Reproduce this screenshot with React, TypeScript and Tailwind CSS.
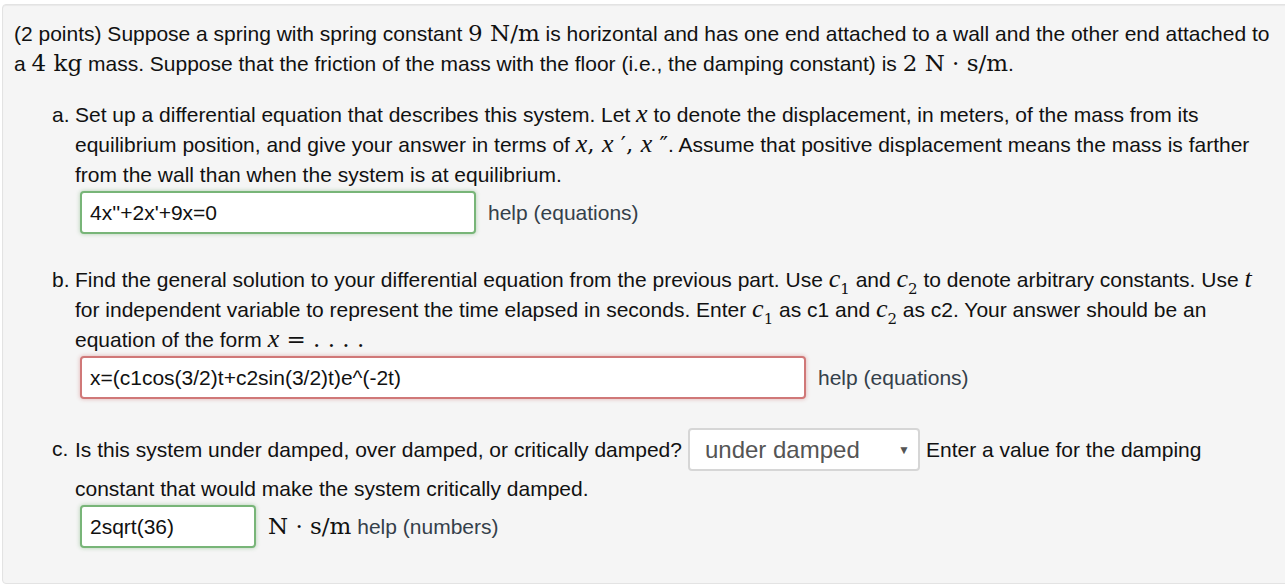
import React from "react";

const sans = { fontFamily: '"Liberation Sans", Arial, sans-serif' };
const serif = { fontFamily: '"DejaVu Serif", "Liberation Serif", serif' };
const times = { fontFamily: '"Liberation Serif", serif' };

// math in a serif face, a little larger than the body text
const M = ({ children }: { children: React.ReactNode }) => (
  <span className="text-[23px] leading-none" style={serif}>
    {children}
  </span>
);
const V = ({ children }: { children: React.ReactNode }) => (
  <i className="text-[26px]" style={times}>
    {children}
  </i>
);
const C = ({ n }: { n: string }) => (
  <M>
    <V>c</V>
    <sub className="text-[15px] align-[-3px]">{n}</sub>
  </M>
);

const Help = ({ label }: { label: string }) => <span className="text-[#34404a]">help ({label})</span>;

export default function App() {
  return (
    <div className="min-h-screen bg-white pt-[4px] pl-[2px] text-[21px] leading-[30px] text-[#111]" style={sans}>
      <div className="w-[1300px] whitespace-nowrap rounded-l-[4px] border border-[#e3e3e3] bg-[#f5f5f5] pt-[14px] pb-[35px] pl-[11px] shadow-[inset_0_1px_1px_rgba(0,0,0,0.05)]">
        <p>
          (2 points) Suppose a spring with spring constant <M>9 N/m</M> is horizontal and has one end attached to a wall and the other end attached to
          <br />a <M>4 kg</M> mass. Suppose that the friction of the mass with the floor (i.e., the damping constant) is <M>2 N · s/m</M>.
        </p>

        <div className="mt-[21px] flex pl-[38px]">
          <span className="w-[23px] shrink-0">a.</span>
          <div>
            <p>
              Set up a differential equation that describes this system. Let <M><V>x</V></M> to denote the displacement, in meters, of the mass from its
              <br />
              equilibrium position, and give your answer in terms of <M><V>x</V>, <V>x</V> ′, <V>x</V> ″</M>. Assume that positive displacement means the mass is farther
              <br />
              from the wall than when the system is at equilibrium.
            </p>
            <div className="mt-[1px] flex items-center gap-[12px] pl-[5px]">
              <div className="flex h-[43px] w-[396px] items-center rounded-[4px] border-2 border-[#78b578] bg-white pl-[8px] text-[21px] shadow-[0_0_4px_rgba(90,160,90,0.45)]">
                4x''+2x'+9x=0
              </div>
              <Help label="equations" />
            </div>
          </div>
        </div>

        <div className="mt-[31px] flex pl-[38px]">
          <span className="w-[23px] shrink-0">b.</span>
          <div>
            <p>
              Find the general solution to your differential equation from the previous part. Use <C n="1" /> and <C n="2" /> to denote arbitrary constants. Use <M><V>t</V></M>
              <br />
              for independent variable to represent the time elapsed in seconds. Enter <C n="1" /> as c1 and <C n="2" /> as c2. Your answer should be an
              <br />
              equation of the form <M><V>x</V> = . . . .</M>
            </p>
            <div className="mt-[1px] flex items-center gap-[12px] pl-[5px]">
              <div className="flex h-[43px] w-[726px] items-center rounded-[4px] border-2 border-[#d07878] bg-white pl-[8px] text-[21px] shadow-[0_0_4px_rgba(200,90,90,0.45)]">
                x=(c1cos(3/2)t+c2sin(3/2)t)e^(-2t)
              </div>
              <Help label="equations" />
            </div>
          </div>
        </div>

        <div className="mt-[29px] flex pl-[38px]">
          <span className="mt-[6px] w-[23px] shrink-0">c.</span>
          <div>
            <div className="flex items-center">
              <span>Is this system under damped, over damped, or critically damped?</span>
              <div className="ml-[6px] mr-[6px] flex h-[43px] w-[232px] items-center justify-between rounded-[4px] border-2 border-[#d6d6d6] bg-white pl-[15px] pr-[8px] text-[24px] text-[#555]">
                <span>under damped</span>
                <span className="text-[12px] text-[#555]">▼</span>
              </div>
              <span>Enter a value for the damping</span>
            </div>
            <p className="mt-[3px]">constant that would make the system critically damped.</p>
            <div className="mt-[1px] flex items-center gap-[12px] pl-[5px]">
              <div className="flex h-[43px] w-[176px] items-center rounded-[4px] border-2 border-[#78b578] bg-white pl-[8px] text-[21px] shadow-[0_0_4px_rgba(90,160,90,0.45)]">
                2sqrt(36)
              </div>
              <span>
                <M>N · s/m</M> <Help label="numbers" />
              </span>
            </div>
          </div>
        </div>
      </div>
    </div>
  );
}
